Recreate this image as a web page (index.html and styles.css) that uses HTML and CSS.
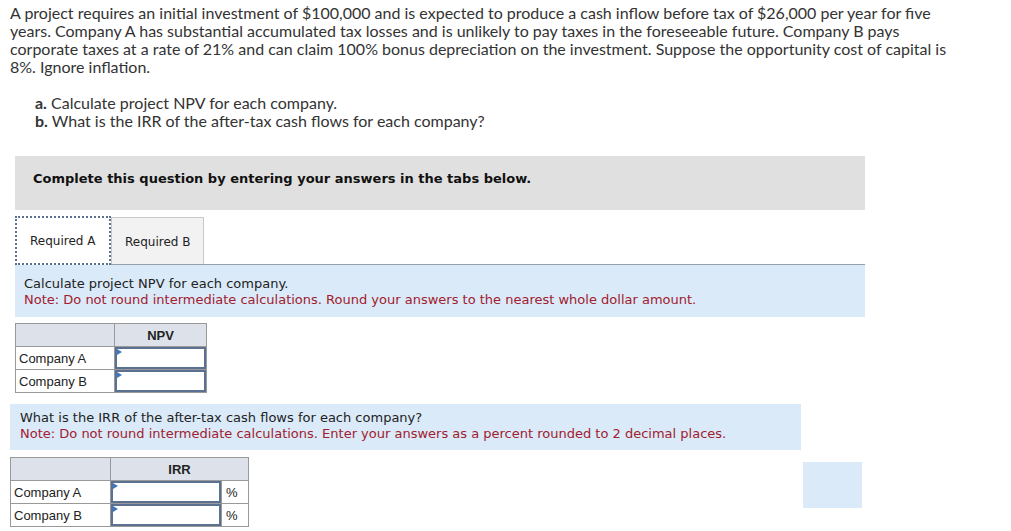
FILE: index.html
```html
<!DOCTYPE html>
<html>
<head>
<meta charset="utf-8">
<link rel="stylesheet" href="styles.css">
</head>
<body>
<div class="page">
  <p class="intro">A project requires an initial investment of $100,000 and is expected to produce a cash inflow before tax of $26,000 per year for five years. Company A has substantial accumulated tax losses and is unlikely to pay taxes in the foreseeable future. Company B pays corporate taxes at a rate of 21% and can claim 100% bonus depreciation on the investment. Suppose the opportunity cost of capital is 8%. Ignore inflation.</p>
  <ol class="parts">
    <li><b>a.</b> Calculate project NPV for each company.</li>
    <li><b>b.</b> What is the IRR of the after-tax cash flows for each company?</li>
  </ol>

  <div class="banner">Complete this question by entering your answers in the tabs below.</div>

  <div class="tabs">
    <div class="tab active">Required A</div>
    <div class="tab">Required B</div>
  </div>

  <div class="panel panel-a">
    <div class="instr">Calculate project NPV for each company.</div>
    <div class="note">Note: Do not round intermediate calculations. Round your answers to the nearest whole dollar amount.</div>
  </div>

  <table class="grid npv">
    <tr class="head"><th class="label"></th><th>NPV</th></tr>
    <tr><td class="label">Company A</td><td class="inp"><div class="box"></div></td></tr>
    <tr><td class="label">Company B</td><td class="inp"><div class="box"></div></td></tr>
  </table>

  <div class="panel panel-b">
    <div class="instr">What is the IRR of the after-tax cash flows for each company?</div>
    <div class="note">Note: Do not round intermediate calculations. Enter your answers as a percent rounded to 2 decimal places.</div>
  </div>

  <div class="irr-row">
    <table class="grid irr">
      <tr class="head"><th class="label"></th><th colspan="2">IRR</th></tr>
      <tr><td class="label">Company A</td><td class="inp"><div class="box"></div></td><td class="pct">%</td></tr>
      <tr><td class="label">Company B</td><td class="inp"><div class="box"></div></td><td class="pct">%</td></tr>
    </table>
    <div class="side-block"></div>
  </div>
</div>
</body>
</html>
```

FILE: styles.css
```css
html, body {
  margin: 0;
  padding: 0;
  background: #fff;
}

.page {
  width: 1011px;
  padding-top: 4px;
}

.intro {
  margin: 0 0 0 10px;
  width: 950px;
  font-family: "Lato", "Open Sans", sans-serif;
  font-size: 16px;
  line-height: 18px;
  color: #333;
}

.parts {
  list-style: none;
  margin: 18px 0 0 35px;
  padding: 0;
  font-family: "Lato", "Open Sans", sans-serif;
  font-size: 16px;
  line-height: 18px;
  color: #333;
}

.parts b {
  font-weight: 700;
}

.banner {
  margin: 26px 0 0 15px;
  width: 832px;
  height: 54px;
  padding-left: 18px;
  box-sizing: content-box;
  background: #e0e0e0;
  font-family: "DejaVu Sans", Verdana, sans-serif;
  font-weight: bold;
  font-size: 13px;
  line-height: 46px;
  color: #111;
}

.tabs {
  display: flex;
  margin: 7px 0 0 15px;
  height: 47px;
}

.tab {
  font-family: "DejaVu Sans", Verdana, sans-serif;
  font-size: 12px;
  color: #222;
  height: 47px;
  line-height: 48px;
  padding: 0 13px;
  border: 1px solid #c8c8c8;
  border-bottom: none;
  background: #f2f2f2;
  box-sizing: border-box;
}

.tab.active {
  background: #fff;
  border: 2px dotted #5a7090;
  height: 49px;
  line-height: 46px;
  margin-top: -1px;
  width: 96px;
  position: relative;
  z-index: 2;
}

.panel {
  background: #daeaf8;
  font-family: "DejaVu Sans", Verdana, sans-serif;
  font-size: 13px;
  line-height: 16px;
}

.panel-a {
  margin-left: 15px;
  width: 841px;
  border-top: 1px solid #97a0a8;
  padding: 11px 0 9px 9px;
}

.panel-b {
  margin: 11px 0 0 10px;
  width: 781px;
  padding: 6px 0 8px 10px;
}

.instr {
  color: #222;
}

.note {
  color: #a1202f;
}

.grid {
  border-collapse: collapse;
  font-family: "Liberation Sans", Arial, sans-serif;
  font-size: 13px;
  color: #222;
}

.grid td, .grid th {
  border: 1px solid #999;
  padding: 0;
  height: 22px;
}

.grid .head th {
  background: #dde2ea;
  font-weight: bold;
  height: 22px;
  text-align: center;
}

.grid td.label {
  padding-left: 3px;
  text-align: left;
}

.npv {
  margin: 6px 0 0 15px;
}

.npv .label {
  width: 95px;
}

.npv .inp {
  width: 91px;
}

.irr .label {
  width: 96px;
}

.irr .inp {
  width: 110px;
}

.irr .pct {
  width: 22px;
  padding-left: 4px;
}

.inp {
  position: relative;
}

.box {
  height: 18px;
  border: 2px solid #5b7192;
  background: #fff;
  position: relative;
}

.box::before {
  content: "";
  position: absolute;
  left: 0;
  top: 0;
  border-left: 5px solid #3d78c2;
  border-top: 3px solid transparent;
  border-bottom: 3px solid transparent;
}

.irr-row {
  display: flex;
  align-items: flex-start;
  margin: 7px 0 0 10px;
  width: 852px;
}

.side-block {
  margin-left: auto;
  margin-top: 5px;
  width: 59px;
  height: 46px;
  background: #daeaf8;
}
```
